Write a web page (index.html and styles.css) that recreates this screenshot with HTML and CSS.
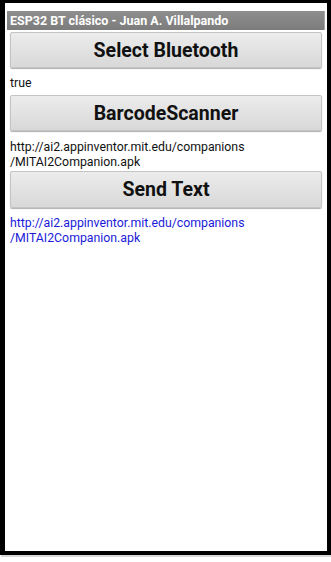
FILE: index.html
```html
<!DOCTYPE html>
<html>
<head>
<meta charset="utf-8">
<link rel="stylesheet" href="styles.css">
</head>
<body>
<div class="frame">
  <div class="titlebar">ESP32 BT clásico - Juan A. Villalpando</div>
  <div class="content">
    <div class="btn">Select Bluetooth</div>
    <div class="label first">true</div>
    <div class="btn">BarcodeScanner</div>
    <div class="label second">http://ai2.appinventor.mit.edu/companions<br>/MITAI2Companion.apk</div>
    <div class="btn tall">Send Text</div>
    <div class="label blue">http://ai2.appinventor.mit.edu/companions<br>/MITAI2Companion.apk</div>
  </div>
</div>
</body>
</html>
```

FILE: styles.css
```css
html, body {
  margin: 0;
  padding: 0;
  background: #ffffff;
}
body {
  width: 331px;
  height: 562px;
  overflow: hidden;
  font-family: Roboto, "Liberation Sans", sans-serif;
}
.frame {
  box-sizing: border-box;
  width: 331px;
  height: 555px;
  border-style: solid;
  border-color: #000;
  border-width: 3px 4px 4px 5px;
  background: #fff;
  padding: 8px 2px 0 2px;
  display: flex;
  flex-direction: column;
  box-shadow: 1px 2px 0 #d8d8d8;
}
.titlebar {
  height: 19px;
  background: linear-gradient(#8e8e8e, #7c7c7c);
  color: #fff;
  font-weight: bold;
  font-size: 12.5px;
  line-height: 19px;
  padding-left: 3px;
  border-right: 1px solid #a8a8a8;
}
.content {
  display: flex;
  flex-direction: column;
  padding: 2px 3px 0 3px;
}
.btn {
  height: 36px;
  flex: none;
  box-sizing: border-box;
  border: 1px solid #c4c4c4;
  border-radius: 2px;
  background: linear-gradient(#ececec, #d8d8d8);
  box-shadow: 0 1px 1px #b0b0b0;
  font-weight: bold;
  font-size: 19.5px;
  color: #111;
  display: flex;
  align-items: center;
  justify-content: center;
}
.btn.tall {
  height: 37px;
}
.label {
  font-size: 12.3px;
  line-height: 15px;
  color: #111;
  padding: 8px 0 0 0;
}
.label.first {
  padding: 8px 0 4px 0;
}
.label.second {
  padding: 8.5px 0 1.5px 0;
}
.blue {
  color: #1a1ad8;
}
```
